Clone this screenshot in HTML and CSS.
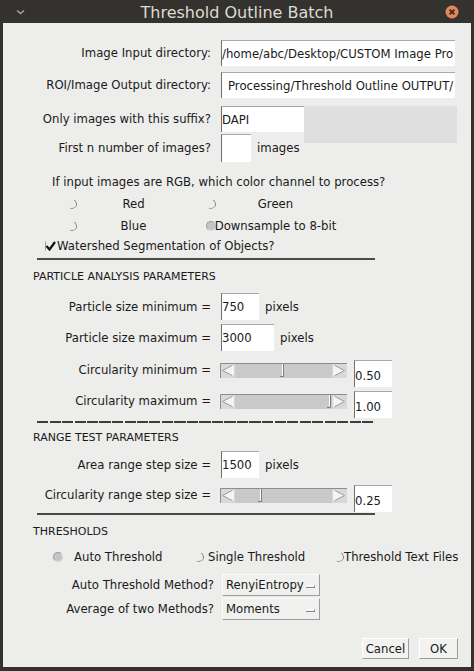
FILE: index.html
```html
<!DOCTYPE html>
<html>
<head>
<meta charset="utf-8">
<link rel="stylesheet" href="styles.css">
</head>
<body>
<div class="window">
  <div class="titlebar">
    <span class="chev"><svg width="9" height="6" viewBox="0 0 9 6"><path d="M1 1.5 L4.5 4.5 L8 1.5" fill="none" stroke="#a5a39d" stroke-width="1.6"/></svg></span>
    <span class="title">Threshold Outline Batch</span>
    <span class="close"><svg width="14" height="14" viewBox="0 0 14 14"><circle cx="7" cy="7" r="6.5" fill="#e2885a"/><path d="M4.6 4.6 L9.4 9.4 M9.4 4.6 L4.6 9.4" stroke="#3b2a22" stroke-width="1.8"/></svg></span>
  </div>
  <div class="content">
    <div class="row r1"><span class="label">Image Input directory:</span><div class="field dir">/home/abc/Desktop/CUSTOM Image Pro</div></div>
    <div class="row r2"><span class="label">ROI/Image Output directory:</span><div class="field dir pad">Processing/Threshold Outline OUTPUT/</div></div>
    <div class="row r3"><span class="label">Only images with this suffix?</span><div class="field suffix">DAPI</div><div class="grayfill"></div></div>
    <div class="row r4"><span class="label">First n number of images?</span><div class="field nimg"></div><span class="unit">images</span></div>

    <div class="msg rgbq">If input images are RGB, which color channel to process?</div>
    <div class="radiogrid">
      <div class="rcell c1"><span class="radio"></span><span class="rlabel l1">Red</span></div>
      <div class="rcell c2"><span class="radio"></span><span class="rlabel l2">Green</span></div>
      <div class="rcell c1"><span class="radio"></span><span class="rlabel l1">Blue</span></div>
      <div class="rcell c2"><span class="radio on"></span><span class="rlabel l2">Downsample to 8-bit</span></div>
    </div>
    <div class="checkrow"><svg class="check" width="11" height="10" viewBox="0 0 11 10"><path d="M0.5 0.5 V9.5" stroke="#9a9a9a"/><path d="M1.5 5 L4.5 8.5 L10 1" fill="none" stroke="#111" stroke-width="2.2"/></svg><span>Watershed Segmentation of Objects?</span></div>
    <div class="rule r-a"></div>

    <div class="heading h-part">PARTICLE ANALYSIS PARAMETERS</div>
    <div class="row num n1"><span class="label">Particle size minimum =</span><div class="field w38">750</div><span class="unit">pixels</span></div>
    <div class="row num n2"><span class="label">Particle size maximum =</span><div class="field w53">3000</div><span class="unit">pixels</span></div>
    <div class="row srow s1"><span class="label">Circularity minimum =</span>
      <svg class="slider" width="127" height="15" viewBox="0 0 127 15">
        <rect x="0" y="0" width="127" height="15" fill="#c9c9c9"/>
        <rect x="0" y="0" width="15" height="15" fill="#d9d9d9"/>
        <rect x="112" y="0" width="15" height="15" fill="#d9d9d9"/>
        <path d="M0.5 15 V0.5 H127" fill="none" stroke="#8c8c8c"/>
        <path d="M13 2 L2.5 7.5 L13 13" fill="#f4f4f4" stroke="#9a9a9a"/>
        <path d="M13 2 V13" stroke="#ffffff"/>
        <path d="M114 2 L124.5 7.5 L114 13" fill="#f4f4f4" stroke="#9a9a9a"/>
        <path d="M114 2 V13" stroke="#ffffff"/>
        <path d="M63.5 1 V13.5 H60" fill="none" stroke="#7d7d7d"/>
        <path d="M62.5 1 V12.5" stroke="#ffffff"/>
      </svg>
      <div class="field w38 val">0.50</div></div>
    <div class="row srow s2"><span class="label">Circularity maximum =</span>
      <svg class="slider" width="127" height="15" viewBox="0 0 127 15">
        <rect x="0" y="0" width="127" height="15" fill="#c9c9c9"/>
        <rect x="0" y="0" width="15" height="15" fill="#d9d9d9"/>
        <rect x="112" y="0" width="15" height="15" fill="#d9d9d9"/>
        <path d="M0.5 15 V0.5 H127" fill="none" stroke="#8c8c8c"/>
        <path d="M13 2 L2.5 7.5 L13 13" fill="#f4f4f4" stroke="#9a9a9a"/>
        <path d="M13 2 V13" stroke="#ffffff"/>
        <path d="M114 2 L124.5 7.5 L114 13" fill="#f4f4f4" stroke="#9a9a9a"/>
        <path d="M114 2 V13" stroke="#ffffff"/>
        <path d="M110.5 1 V13.5 H107" fill="none" stroke="#7d7d7d"/>
        <path d="M109.5 1 V12.5" stroke="#ffffff"/>
      </svg>
      <div class="field w38 val">1.00</div></div>
    <div class="dashrule"></div>

    <div class="heading h-range">RANGE TEST PARAMETERS</div>
    <div class="row num n3"><span class="label">Area range step size =</span><div class="field w38">1500</div><span class="unit">pixels</span></div>
    <div class="row srow s3"><span class="label">Circularity range step size =</span>
      <svg class="slider" width="127" height="15" viewBox="0 0 127 15">
        <rect x="0" y="0" width="127" height="15" fill="#c9c9c9"/>
        <rect x="0" y="0" width="15" height="15" fill="#d9d9d9"/>
        <rect x="112" y="0" width="15" height="15" fill="#d9d9d9"/>
        <path d="M0.5 15 V0.5 H127" fill="none" stroke="#8c8c8c"/>
        <path d="M13 2 L2.5 7.5 L13 13" fill="#f4f4f4" stroke="#9a9a9a"/>
        <path d="M13 2 V13" stroke="#ffffff"/>
        <path d="M114 2 L124.5 7.5 L114 13" fill="#f4f4f4" stroke="#9a9a9a"/>
        <path d="M114 2 V13" stroke="#ffffff"/>
        <path d="M41.5 1 V13.5 H38" fill="none" stroke="#7d7d7d"/>
        <path d="M40.5 1 V12.5" stroke="#ffffff"/>
      </svg>
      <div class="field w38 val">0.25</div></div>
    <div class="rule r-b"></div>

    <div class="heading h-thr">THRESHOLDS</div>
    <div class="thrradios">
      <span class="radio on"></span><span class="tlabel t1">Auto Threshold</span>
      <span class="radio"></span><span class="tlabel t2">Single Threshold</span>
      <span class="radio"></span><span class="tlabel t3">Threshold Text Files</span>
    </div>
    <div class="row choice c-a"><span class="label">Auto Threshold Method?</span><div class="dropdown">RenyiEntropy<span class="ind"></span></div></div>
    <div class="row choice c-b"><span class="label">Average of two Methods?</span><div class="dropdown">Moments<span class="ind"></span></div></div>

    <div class="buttons">
      <button class="btn cancel">Cancel</button>
      <button class="btn ok">OK</button>
    </div>
  </div>
</div>
</body>
</html>
```

FILE: styles.css
```css
html, body {
  margin: 0;
  padding: 0;
  background: #2f2e2b;
}
.window {
  width: 474px;
  height: 671px;
  display: flex;
  flex-direction: column;
  background: #33322e;
  font-family: "DejaVu Sans", sans-serif;
  font-size: 11.7px;
  color: #1a1a1a;
}
.titlebar {
  height: 23px;
  display: grid;
  grid-template-columns: 1fr auto 1fr;
  align-items: center;
}
.chev {
  justify-self: start;
  margin-left: 16px;
  display: flex;
}
.title {
  font-size: 16px;
  color: #dfdbd2;
  line-height: 23px;
  padding-top: 1px;
}
.close {
  justify-self: end;
  margin-right: 15px;
  display: flex;
}
.content {
  flex: 1;
  margin: 0 3px 4px 3px;
  background: #ededec;
  display: flex;
  flex-direction: column;
  padding-top: 17px;
}
.row {
  display: flex;
  align-items: center;
  height: 26px;
}
.label {
  width: 208px;
  text-align: right;
  white-space: nowrap;
  flex: none;
}
.field {
  margin-left: 10px;
  height: 26px;
  box-sizing: border-box;
  background: #ffffff;
  border-top: 1px solid #a8a8a8;
  border-left: 1px solid #6f6f6f;
  display: flex;
  align-items: center;
  white-space: nowrap;
  overflow: hidden;
  flex: none;
}
.dir { width: 234px; }
.pad { padding-left: 6px; }
.r2 { margin-top: 6px; }
.r3 { margin-top: 8px; align-items: flex-start; }
.r3 .label { line-height: 26px; }
.suffix { width: 83px; }
.grayfill {
  width: 153px;
  height: 37px;
  background: #dfdfdf;
  flex: none;
}
.r4 { margin-top: 2px; height: 28px; }
.nimg { width: 30px; height: 28px; }
.unit { margin-left: 6px; }

.msg { height: 16px; line-height: 16px; }
.rgbq { margin-top: 12px; padding-left: 49px; }
.radiogrid {
  display: grid;
  grid-template-columns: 140px 140px;
  grid-auto-rows: 18px;
  row-gap: 4px;
  margin-top: 5px;
  padding-left: 60px;
}
.rcell { display: flex; align-items: center; }
.radio {
  width: 10px;
  height: 10px;
  box-sizing: border-box;
  border-radius: 50%;
  border: 1px solid transparent;
  border-right-color: #7a7a7a;
  border-bottom-color: #9a9a9a;
  transform: rotate(-15deg);
  flex: none;
}
.radio.on {
  background: #c4c4c4;
  border-color: #d8d8d8;
  border-left-color: #9c9c9c;
  border-top-color: #9c9c9c;
  transform: none;
}
.c1 .radio { margin-left: 4px; }
.c2 .radio { margin-left: 3px; }
.rlabel { text-align: center; white-space: nowrap; }
.l1 { width: 113px; }
.l2 { width: 119px; }
.rcell.c2 .rlabel { display: flex; justify-content: center; }

.checkrow {
  display: flex;
  align-items: center;
  height: 18px;
  margin-top: 2px;
  padding-left: 42px;
}
.check { margin-right: 1px; }

.rule {
  height: 2px;
  width: 338px;
  margin-left: 34px;
  background: #4a4a4a;
}
.r-a { margin-top: 3px; }
.r-b { margin-top: 1px; }
.dashrule {
  height: 2px;
  width: 338px;
  margin-left: 34px;
  margin-top: 3px;
  background: repeating-linear-gradient(90deg, #3c3c3c 0 11px, transparent 11px 12.5px);
}

.heading {
  height: 16px;
  line-height: 16px;
  font-size: 11px;
  padding-left: 30px;
}
.h-part { margin-top: 9px; }
.h-range { margin-top: 7px; }
.h-thr { margin-top: 9px; }

.num { height: 27px; }
.num .field { height: 27px; }
.n1 { margin-top: 8px; }
.n2 { margin-top: 4px; }
.n3 { margin-top: 5px; }
.w38 { width: 38px; }
.w53 { width: 53px; }

.srow { height: 27px; align-items: flex-start; }
.srow .label { line-height: 20px; }
.slider { margin-left: 9px; margin-top: 3px; flex: none; }
.val { margin-left: 7px; height: 27px; padding-top: 3px; }
.s1 { margin-top: 9px; }
.s2 { margin-top: 4px; }
.s3 { margin-top: 7px; }

.thrradios {
  display: flex;
  align-items: center;
  height: 18px;
  margin-top: 8px;
  padding-left: 50px;
}
.tlabel { white-space: nowrap; }
.t1 { margin-left: 11px; width: 120px; }
.t2 { margin-left: 4px; width: 126px; }
.t3 { margin-left: 0px; }

.choice { height: 22px; }
.choice .label { width: 211px; }
.c-a { margin-top: 8px; }
.c-b { margin-top: 2px; }
.dropdown {
  margin-left: 8px;
  width: 98px;
  height: 22px;
  box-sizing: border-box;
  background: #f0f0ef;
  border-top: 1px solid #fbfbfb;
  border-left: 1px solid #fbfbfb;
  border-right: 1px solid #9d9d9d;
  border-bottom: 1px solid #9d9d9d;
  padding-left: 3px;
  display: flex;
  align-items: center;
  justify-content: space-between;
  padding-right: 4px;
}
.ind {
  width: 9px;
  height: 3px;
  box-sizing: border-box;
  border-bottom: 1px solid #8a8a8a;
  border-right: 1px solid #8a8a8a;
  border-top: 1px solid #ffffff;
  margin-top: 3px;
}

.buttons {
  display: flex;
  justify-content: flex-end;
  gap: 10px;
  margin-top: 18px;
  padding-right: 13px;
}
.btn {
  font-family: "DejaVu Sans", sans-serif;
  font-size: 11.7px;
  color: #1a1a1a;
  height: 21px;
  padding: 0;
  background: #f2f2f1;
  border: none;
  border-top: 1px solid #ffffff;
  border-left: 1px solid #ffffff;
  border-right: 1px solid #9d9d9d;
  border-bottom: 1px solid #9d9d9d;
}
.cancel { width: 47px; }
.ok { width: 39px; }
```
